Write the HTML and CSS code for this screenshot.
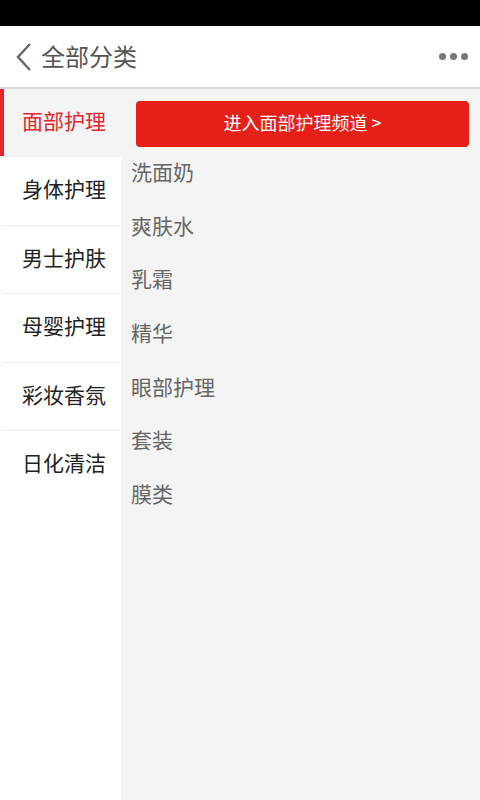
FILE: index.html
```html
<!DOCTYPE html>
<html>
<head>
	<meta charset="utf-8">
	<title>全部分类</title>
	<link rel="stylesheet" href="styles.css">
</head>
<body>
	<div class="statusbar"></div>
	<div class="header">
		<svg class="back" width="18" height="30" viewBox="0 0 18 30"><polyline points="15,2 3,15 15,28" fill="none" stroke="#666" stroke-width="2.4"/></svg>
		<span class="title">全部分类</span>
		<div class="more"><i></i><i></i><i></i></div>
	</div>
	<div class="main">
		<ul class="sidebar">
			<li class="cat active">面部护理</li>
			<li class="cat">身体护理</li>
			<li class="cat">男士护肤</li>
			<li class="cat">母婴护理</li>
			<li class="cat">彩妆香氛</li>
			<li class="cat">日化清洁</li>
		</ul>
		<div class="panel">
			<a class="channel" href="#">进入面部护理频道 &gt;</a>
			<ul class="sublist">
				<li>洗面奶</li>
				<li>爽肤水</li>
				<li>乳霜</li>
				<li>精华</li>
				<li>眼部护理</li>
				<li>套装</li>
				<li>膜类</li>
			</ul>
		</div>
	</div>
</body>
</html>
```

FILE: styles.css
```css
html, body {
	margin:0;
	padding:0;
	height:100%;
}
body {
	font-family:"Noto Sans CJK SC", "Noto Sans", sans-serif;
	background:#fff;
	display:flex;
	flex-direction:column;
	overflow:hidden;
}
ul {
	list-style:none;
	margin:0;
	padding:0;
}
.statusbar {
	height:26px;
	background:#000;
	flex-shrink:0;
}
.header {
	height:61px;
	border-bottom:2px solid #d8d8d8;
	display:flex;
	align-items:center;
	padding:0 12px 0 15px;
	flex-shrink:0;
}
.back {
	margin-right:8px;
	margin-top:1px;
}
.title {
	font-size:24px;
	color:#555;
	flex:1;
	padding-bottom:3px;
}
.more {
	display:flex;
	gap:4px;
}
.more i {
	width:7px;
	height:7px;
	border-radius:50%;
	background:#777;
}
.main {
	flex:1;
	display:flex;
}
.sidebar {
	width:121px;
	background:#fff;
}
.cat {
	height:67.5px;
	box-sizing:border-box;
	height:68.5px;
	border-top:1px solid #ececec;
	margin-left:2px;
	padding:0 0 5px 20px;
	display:flex;
	align-items:center;
	font-size:21px;
	color:#222;
	background:#fff;
}
.cat.active {
	border-top:none;
	margin-left:0;
	padding-left:22px;
	height:67px;
	color:#e0282e;
	background:#f4f4f4;
	box-shadow:inset 4px 0 0 #e3262c;
}
.panel {
	flex:1;
	background:#f4f4f4;
	padding:12px 11px 0 10px;
}
.channel {
	display:flex;
	align-items:center;
	justify-content:center;
	box-sizing:border-box;
	height:46px;
	padding-bottom:5px;
	margin-left:5px;
	background:#e52019;
	border-radius:4px;
	color:#fff;
	font-size:18px;
	text-decoration:none;
}
.sublist {
	margin-top:4px;
}
.sublist li {
	height:53.7px;
	line-height:40px;
	font-size:21px;
	color:#666;
}
```
